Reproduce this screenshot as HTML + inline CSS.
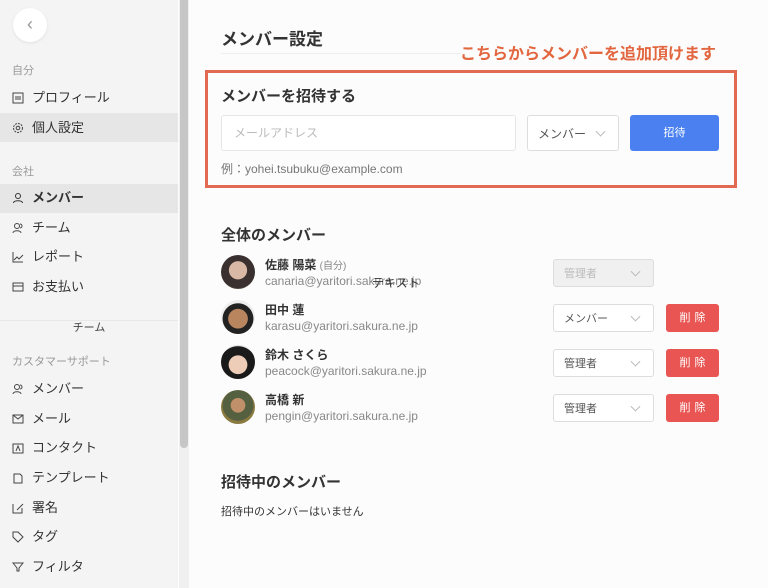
<!DOCTYPE html>
<html><head><meta charset="utf-8"><style>
*{box-sizing:border-box;margin:0;padding:0}
body{width:768px;height:588px;overflow:hidden;background:#fcfcfc;font-family:"Liberation Sans","Noto Sans CJK JP",sans-serif;color:#333;position:relative}
.a{position:absolute;white-space:nowrap}
#side{position:absolute;left:0;top:0;width:178px;height:588px;background:#f4f4f4}
.hl{position:absolute;left:0;width:178px;height:29px;background:#e6e6e6}
.it{position:absolute;left:12px;font-size:13px;color:#333;display:flex;align-items:center;gap:8px;line-height:16px}
.it svg{width:12px;height:12px}
.cap{position:absolute;left:12px;font-size:11px;color:#999}
.sel{position:absolute;border:1px solid #ddd;border-radius:3px;background:#fff;font-size:11px;color:#555;padding-left:10px;display:flex;align-items:center}
.sel:after{content:"";position:absolute;right:14px;top:50%;width:6px;height:6px;border-right:1px solid #bbb;border-bottom:1px solid #bbb;transform:translateY(-70%) rotate(45deg)}
.del{position:absolute;left:666px;width:53px;height:28px;background:#e85552;border-radius:3px;color:#fff;font-size:11px;text-align:center;line-height:28px;letter-spacing:4px;padding-left:4px}
.av{position:absolute;left:221px;width:34px;height:34px;border-radius:50%}
.nm{position:absolute;left:265px;font-size:12px;font-weight:bold;color:#333}
.em{position:absolute;left:265px;font-size:12px;color:#888}
</style></head><body>
<div id="side">
<div class="a" style="left:13px;top:8px;width:34px;height:34px;border-radius:50%;background:#fff;box-shadow:0 1px 3px rgba(0,0,0,.08);color:#999;font-size:18px;text-align:center;line-height:32px">&lsaquo;</div>
<div class="cap" style="top:62px">自分</div>
<div class="it" style="top:90px"><svg viewBox="0 0 12 12"><rect x="1" y="1" width="10" height="10" fill="none" stroke="#444"/><path d="M4 4v4M6 4v4M8 4v4" stroke="#444"/></svg>プロフィール</div>
<div class="hl" style="top:113px"></div>
<div class="it" style="top:120px"><svg viewBox="0 0 12 12"><circle cx="6" cy="6" r="4.5" fill="none" stroke="#444" stroke-dasharray="2 1"/><circle cx="6" cy="6" r="1.8" fill="none" stroke="#444"/></svg>個人設定</div>
<div class="cap" style="top:163px">会社</div>
<div class="hl" style="top:184px"></div>
<div class="it" style="top:190px;font-weight:bold"><svg viewBox="0 0 12 12"><circle cx="6" cy="4" r="2.5" fill="none" stroke="#333"/><path d="M1.5 11c0-3 9-3 9 0" fill="none" stroke="#333"/></svg>メンバー</div>
<div class="it" style="top:220px"><svg viewBox="0 0 12 12"><circle cx="5" cy="4" r="2.5" fill="none" stroke="#444"/><path d="M1 11c0-3 8-3 8 0M8 2a2 2 0 0 1 0 4" fill="none" stroke="#444"/></svg>チーム</div>
<div class="it" style="top:249px"><svg viewBox="0 0 12 12"><path d="M1 1v10h10M2 9l3-3 2 2 4-4" fill="none" stroke="#444"/></svg>レポート</div>
<div class="it" style="top:279px"><svg viewBox="0 0 12 12"><rect x="1" y="2" width="10" height="8" fill="none" stroke="#444"/><path d="M1 5h10" stroke="#444"/></svg>お支払い</div>
<div class="a" style="left:0;top:320px;width:178px;border-top:1px solid #e8e8e8"></div>
<div class="a" style="left:0;top:319px;width:178px;text-align:center;font-size:11px;color:#444">チーム</div>
<div class="cap" style="top:353px">カスタマーサポート</div>
<div class="it" style="top:381px"><svg viewBox="0 0 12 12"><circle cx="5" cy="4" r="2.5" fill="none" stroke="#444"/><path d="M1 11c0-3 8-3 8 0M8 2a2 2 0 0 1 0 4" fill="none" stroke="#444"/></svg>メンバー</div>
<div class="it" style="top:411px"><svg viewBox="0 0 12 12"><rect x="1" y="2" width="10" height="8" fill="none" stroke="#444"/><path d="M1 2l5 4 5-4" fill="none" stroke="#444"/></svg>メール</div>
<div class="it" style="top:440px"><svg viewBox="0 0 12 12"><rect x="1" y="2" width="10" height="9" fill="none" stroke="#444"/><path d="M4 9l2-5 2 5" fill="none" stroke="#444"/></svg>コンタクト</div>
<div class="it" style="top:470px"><svg viewBox="0 0 12 12"><path d="M2 2h6l2 2v7H2z" fill="none" stroke="#444"/></svg>テンプレート</div>
<div class="it" style="top:500px"><svg viewBox="0 0 12 12"><path d="M1 2v9h9V6M5 8l6-6" fill="none" stroke="#444"/></svg>署名</div>
<div class="it" style="top:529px"><svg viewBox="0 0 12 12"><path d="M6 1l5 5-5 5-5-5V1z" fill="none" stroke="#444"/></svg>タグ</div>
<div class="it" style="top:559px"><svg viewBox="0 0 12 12"><path d="M1 2h10L7 7v3H5V7z" fill="none" stroke="#444"/></svg>フィルタ</div>
</div>
<div class="a" style="left:179px;top:0;width:10px;height:588px;background:#f0f0f0"></div>
<div class="a" style="left:180px;top:0;width:8px;height:448px;background:#c6c6c6;border-radius:0 0 4px 4px"></div>

<div class="a" style="left:221px;top:25px;font-size:17px;font-weight:bold;color:#333">メンバー設定</div>
<div class="a" style="left:221px;top:53px;width:240px;border-top:1px solid #eee"></div>
<div class="a" style="left:460px;top:40px;font-size:16px;font-weight:bold;color:#e2663f">こちらからメンバーを追加頂けます</div>
<div class="a" style="left:205px;top:70px;width:532px;height:118px;border:3px solid #e26a52"></div>
<div class="a" style="left:221px;top:85px;font-size:15px;font-weight:bold;color:#333">メンバーを招待する</div>
<div class="a" style="left:221px;top:115px;width:295px;height:36px;border:1px solid #e6e6e6;border-radius:3px;background:#fff"></div>
<div class="a" style="left:234px;top:124px;font-size:12px;color:#bbb">メールアドレス</div>
<div class="sel" style="left:527px;top:115px;width:92px;height:36px;font-size:12px">メンバー</div>
<div class="a" style="left:630px;top:115px;width:89px;height:36px;background:#4a80f0;border-radius:3px;color:#fff;font-size:11px;text-align:center;line-height:36px">招待</div>
<div class="a" style="left:221px;top:160px;font-size:12px;color:#777">例：yohei.tsubuku@example.com</div>

<div class="a" style="left:221px;top:224px;font-size:15px;font-weight:bold;color:#333">全体のメンバー</div>

<div class="av" style="top:255px;background:radial-gradient(circle at 50% 45%,#d9b9a5 0 35%,#3a3030 37% 70%,#5a5040 72%)"></div>
<div class="nm" style="top:256px">佐藤 陽菜 <span style="font-weight:normal;font-size:10px;color:#888">(自分)</span></div>
<div class="em" style="top:274px">canaria@yaritori.sakura.ne.jp</div>
<div class="a" style="left:372px;top:274px;font-size:12px;color:#333">テキスト</div>
<div class="sel" style="left:553px;top:259px;width:101px;height:28px;background:#f0f0f0;color:#bbb">管理者</div>

<div class="av" style="top:300px;background:radial-gradient(circle at 50% 55%,#b8855e 0 38%,#222 40% 60%,#eee 62%)"></div>
<div class="nm" style="top:301px">田中 蓮</div>
<div class="em" style="top:319px">karasu@yaritori.sakura.ne.jp</div>
<div class="sel" style="left:553px;top:304px;width:101px;height:28px">メンバー</div>
<div class="del" style="top:304px">削除</div>

<div class="av" style="top:345px;background:radial-gradient(circle at 50% 58%,#edcdb8 0 35%,#1a1a1a 37% 70%,#ddd 72%)"></div>
<div class="nm" style="top:346px">鈴木 さくら</div>
<div class="em" style="top:364px">peacock@yaritori.sakura.ne.jp</div>
<div class="sel" style="left:553px;top:349px;width:101px;height:28px">管理者</div>
<div class="del" style="top:349px">削除</div>

<div class="av" style="top:390px;background:radial-gradient(circle at 50% 45%,#c0906a 0 28%,#556040 30% 60%,#8a7a40 62%)"></div>
<div class="nm" style="top:391px">高橋 新</div>
<div class="em" style="top:409px">pengin@yaritori.sakura.ne.jp</div>
<div class="sel" style="left:553px;top:394px;width:101px;height:28px">管理者</div>
<div class="del" style="top:394px">削除</div>

<div class="a" style="left:221px;top:471px;font-size:15px;font-weight:bold;color:#333">招待中のメンバー</div>
<div class="a" style="left:221px;top:503px;font-size:11px;color:#333">招待中のメンバーはいません</div>
</body></html>
